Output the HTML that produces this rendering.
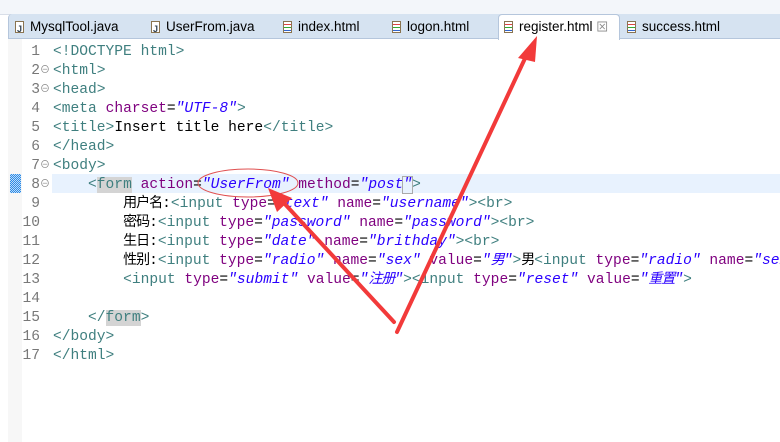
<!DOCTYPE html>
<html><head><meta charset="utf-8"><style>
body{margin:0;width:780px;height:442px;overflow:hidden;background:#fff;position:relative;font-family:"Liberation Sans","Noto Sans CJK SC",sans-serif}
.top{position:absolute;left:0;top:0;width:780px;height:14px;background:#f3f6fa;border-bottom:1px solid #d8dee8}
.tabs{position:absolute;left:8px;top:14px;width:772px;height:24px;background:#d6e3f1;border-bottom:1px solid #b5c6dc;border-left:1px solid #b5c6dc;border-radius:4px 0 0 0}
.tab{position:absolute;top:17px;height:20px;font-size:13.5px;color:#000;line-height:20px}
.ic{display:inline-block;width:9px;height:12px;border:1px solid #8a7450;background:#fff;vertical-align:-2px;margin-right:6px;position:relative;box-sizing:border-box}
.ic.j::after{content:"J";position:absolute;left:1px;top:-3px;font-size:9px;color:#345;font-weight:bold}
.ic.h{background:linear-gradient(#fff 2px,#d44 2px,#d44 3px,#fff 3px,#fff 5px,#3a3 5px,#3a3 6px,#fff 6px,#fff 8px,#36c 8px,#36c 9px,#fff 9px)}
.act{position:absolute;left:498px;top:14px;width:122px;height:26px;background:#fff;border:1px solid #b5c6dc;border-bottom:none;border-radius:4px 4px 0 0;box-sizing:border-box}
.gut{position:absolute;left:8px;top:39px;width:14px;height:403px;background:#f7f7f7}
.hl{position:absolute;left:52px;top:174px;width:728px;height:19px;background:#e8f2fe}
.mk{position:absolute;left:10px;top:174px;width:11px;height:19px;background:repeating-conic-gradient(#2d8ae6 0 25%,#bcdcf8 0 50%) 0 0/2px 2px}
.code{position:absolute;left:0;top:43px;font-family:"Liberation Mono","Noto Sans CJK SC",monospace;font-size:14.6px;line-height:19px;white-space:pre}
.ln{display:inline-block;width:40px;text-align:right;color:#787878;position:relative}
.ln i{position:absolute;left:40px;top:0;font-style:normal;font-size:10px;color:#888}
.c{display:inline-block;padding-left:13px}
.t{color:#3f7f7f}.a{color:#7f007f}.v{color:#2a00ff;font-style:italic}
.k{display:inline-block;width:13px;text-align:center;font-size:14px}
.g{background:#d4d4d4}
</style></head><body>
<div class="top"></div>
<div class="tabs"></div>
<div class="act"></div>
<div class="tab" style="left:15px"><span class="ic j"></span>MysqlTool.java</div>
<div class="tab" style="left:151px"><span class="ic j"></span>UserFrom.java</div>
<div class="tab" style="left:283px"><span class="ic h"></span>index.html</div>
<div class="tab" style="left:392px"><span class="ic h"></span>logon.html</div>
<div class="tab" style="left:504px"><span class="ic h"></span>register.html <span style="color:#888;font-size:12px">⊠</span></div>
<div class="tab" style="left:627px"><span class="ic h"></span>success.html</div>
<div class="gut"></div>
<div class="hl"></div>
<div class="mk"></div>
<div class="code"><span class="ln">1</span><span class="c"><span class="t">&lt;!DOCTYPE html&gt;</span></span>
<span class="ln">2<i>⊖</i></span><span class="c"><span class="t">&lt;html&gt;</span></span>
<span class="ln">3<i>⊖</i></span><span class="c"><span class="t">&lt;head&gt;</span></span>
<span class="ln">4</span><span class="c"><span class="t">&lt;meta</span> <span class="a">charset</span>=<span class="v">"UTF-8"</span><span class="t">&gt;</span></span>
<span class="ln">5</span><span class="c"><span class="t">&lt;title&gt;</span>Insert title here<span class="t">&lt;/title&gt;</span></span>
<span class="ln">6</span><span class="c"><span class="t">&lt;/head&gt;</span></span>
<span class="ln">7<i>⊖</i></span><span class="c"><span class="t">&lt;body&gt;</span></span>
<span class="ln">8<i>⊖</i></span><span class="c">    <span class="t">&lt;<span class="g">form</span></span> <span class="a">action</span>=<span class="v">"UserFrom"</span> <span class="a">method</span>=<span class="v">"post</span><span class="v" style="outline:1px solid #aaa">"</span><span class="t">&gt;</span></span>
<span class="ln">9</span><span class="c">        <span class="k">用</span><span class="k">户</span><span class="k">名</span>:<span class="t">&lt;input</span> <span class="a">type</span>=<span class="v">"text"</span> <span class="a">name</span>=<span class="v">"username"</span><span class="t">&gt;&lt;br&gt;</span></span>
<span class="ln">10</span><span class="c">        <span class="k">密</span><span class="k">码</span>:<span class="t">&lt;input</span> <span class="a">type</span>=<span class="v">"password"</span> <span class="a">name</span>=<span class="v">"password"</span><span class="t">&gt;&lt;br&gt;</span></span>
<span class="ln">11</span><span class="c">        <span class="k">生</span><span class="k">日</span>:<span class="t">&lt;input</span> <span class="a">type</span>=<span class="v">"date"</span> <span class="a">name</span>=<span class="v">"brithday"</span><span class="t">&gt;&lt;br&gt;</span></span>
<span class="ln">12</span><span class="c">        <span class="k">性</span><span class="k">别</span>:<span class="t">&lt;input</span> <span class="a">type</span>=<span class="v">"radio"</span> <span class="a">name</span>=<span class="v">"sex"</span> <span class="a">value</span>=<span class="v">"<span class="k">男</span>"</span><span class="t">&gt;</span><span class="k">男</span><span class="t">&lt;input</span> <span class="a">type</span>=<span class="v">"radio"</span> <span class="a">name</span>=<span class="v">"sex"</span></span>
<span class="ln">13</span><span class="c">        <span class="t">&lt;input</span> <span class="a">type</span>=<span class="v">"submit"</span> <span class="a">value</span>=<span class="v">"<span class="k">注</span><span class="k">册</span>"</span><span class="t">&gt;&lt;input</span> <span class="a">type</span>=<span class="v">"reset"</span> <span class="a">value</span>=<span class="v">"<span class="k">重</span><span class="k">置</span>"</span><span class="t">&gt;</span></span>
<span class="ln">14</span>
<span class="ln">15</span><span class="c">    <span class="t">&lt;/<span class="g">form</span>&gt;</span></span>
<span class="ln">16</span><span class="c"><span class="t">&lt;/body&gt;</span></span>
<span class="ln">17</span><span class="c"><span class="t">&lt;/html&gt;</span></span></div>
<svg style="position:absolute;left:0;top:0" width="780" height="442">
<ellipse cx="248" cy="183" rx="50" ry="14" fill="none" stroke="#e05050" stroke-width="1"/>
<g stroke="#f23a3a" stroke-width="4" fill="#f23a3a" stroke-linecap="round">
<line x1="397" y1="332" x2="528" y2="52"/>
<line x1="394" y1="322" x2="283" y2="202"/>
</g>
<polygon points="537,36 518,58 535,62" fill="#f23a3a"/>
<polygon points="268,188 277,212 292,198" fill="#f23a3a"/>
</svg>
</body></html>
